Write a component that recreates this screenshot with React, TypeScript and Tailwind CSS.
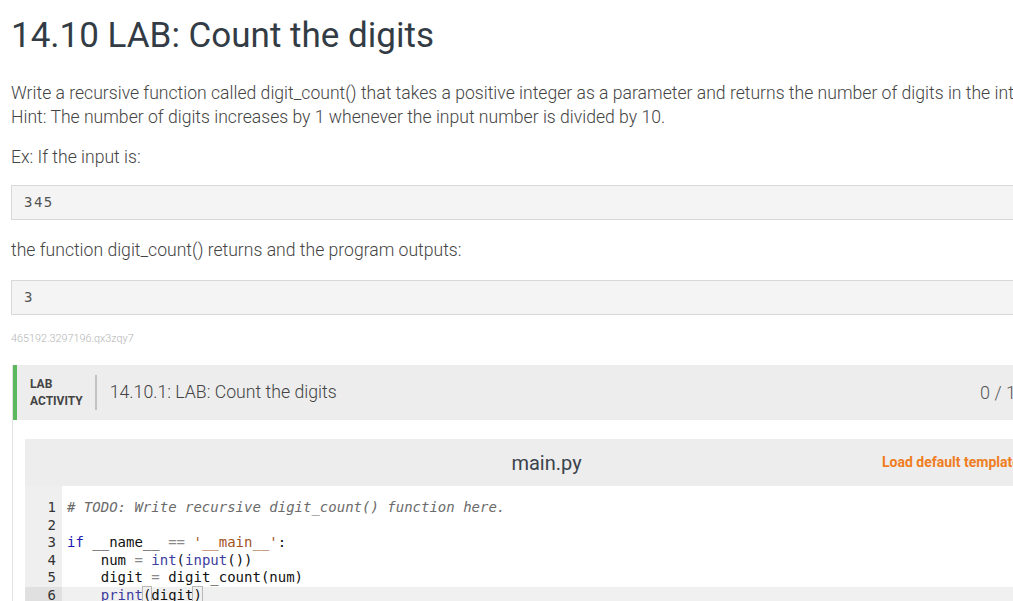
import React from "react";

const codeLines: React.ReactNode[] = [
  <span className="italic text-[#6b6b6b]"># TODO: Write recursive digit_count() function here.</span>,
  <span>&nbsp;</span>,
  <span>
    <span className="text-[#1c1cb0]">if</span> __name__ <span className="text-[#8a8a8a]">==</span>{" "}
    <span className="text-[#a3541c]">'__main__'</span>:
  </span>,
  <span>
    {"    "}num <span className="text-[#8a8a8a]">=</span> <span className="text-[#3d3d9e]">int</span>(
    <span className="text-[#3d3d9e]">input</span>())
  </span>,
  <span>
    {"    "}digit <span className="text-[#8a8a8a]">=</span> digit_count(num)
  </span>,
  <span>
    {"    "}
    <span className="text-[#3d3d9e]">print</span>
    <span className="outline outline-1 outline-[#b8b8b8]">(</span>digit
    <span className="outline outline-1 outline-[#b8b8b8]">)</span>
    <span className="inline-block w-px h-[15px] align-middle bg-black" />
  </span>,
];

const App = () => {
  return (
    <div className="w-[1013px] h-[601px] overflow-hidden bg-white font-['Roboto',sans-serif] text-[#333]">
      <div className="w-[1080px] pl-[11px]">
        {/* TITLE */}
        <h1 className="pt-[12px] text-[35px] leading-[48px] font-normal text-[#333c45]">
          14.10 LAB: Count the digits
        </h1>
        {/* DESCRIPTION */}
        <div className="mt-[21px] text-[17.6px] leading-[24px] font-light text-[#444]">
          <p>
            Write a recursive function called digit_count() that takes a positive integer as a parameter and returns the
            number of digits in the integer.
          </p>
          <p>Hint: The number of digits increases by 1 whenever the input number is divided by 10.</p>
          <p className="mt-[16px]">Ex: If the input is:</p>
        </div>
        <div className="mt-[16px] h-[35px] flex items-center px-[12px] bg-[#f4f4f4] border border-[#d8d8d8] font-['DejaVu_Sans_Mono',monospace] text-[14px] tracking-[1.5px] font-light text-[#555]">
          345
        </div>
        <p className="mt-[18px] text-[17.6px] leading-[24px] font-light text-[#444]">
          the function digit_count() returns and the program outputs:
        </p>
        <div className="mt-[18px] h-[35px] flex items-center px-[12px] bg-[#f4f4f4] border border-[#d8d8d8] font-['DejaVu_Sans_Mono',monospace] text-[14px] tracking-[1.5px] font-light text-[#555]">
          3
        </div>
        <div className="mt-[17px] text-[10.8px] leading-[14px] text-[#b5b5b5] font-light">465192.3297196.qx3zqy7</div>

        {/* LAB ACTIVITY */}
        <div className="mt-[19px] ml-px border-l border-[#e2e2e2]">
          <div className="h-[55px] flex items-center bg-[#ededed] border-l-4 border-[#5cb85c] pl-[13px] pr-[64px]">
            <div className="text-[12px] leading-[17px] font-bold text-[#444]">
              LAB
              <br />
              ACTIVITY
            </div>
            <div className="w-[2px] h-[35px] bg-[#c2c2c2] ml-[12px] mr-[13px]" />
            <span className="text-[17.7px] font-light text-[#444]">14.10.1: LAB: Count the digits</span>
            <span className="ml-auto text-[18px] font-light text-[#555]">0 / 1</span>
          </div>

          {/* EDITOR */}
          <div className="pt-[19px] pl-[12px] pr-[12px]">
            <div className="relative h-[47px] flex items-center justify-center bg-[#ededed]">
              <span className="text-[20px] text-[#3b434c]">main.py</span>
              <span className="absolute left-[857px] text-[14px] font-bold text-[#ef7d22]">
                Load default template...
              </span>
            </div>
            <div className="flex font-['DejaVu_Sans_Mono',monospace] text-[14px] leading-[17.5px] text-[#111]">
              <div className="w-[37px] bg-[#efefef] pt-[13px] pb-4 text-right text-[#333]">
                {codeLines.map((_, i) => (
                  <div key={i} className={i === 5 ? "pr-[6px] bg-[#e0e0e0]" : "pr-[6px]"}>
                    {i + 1}
                  </div>
                ))}
              </div>
              <div className="flex-1 pt-[13px] pb-4">
                {codeLines.map((line, i) => (
                  <div key={i} className={i === 5 ? "pl-[5px] whitespace-pre bg-[#f0f0f0]" : "pl-[5px] whitespace-pre"}>
                    {line}
                  </div>
                ))}
              </div>
            </div>
          </div>
        </div>
      </div>
    </div>
  );
};

export default App;
